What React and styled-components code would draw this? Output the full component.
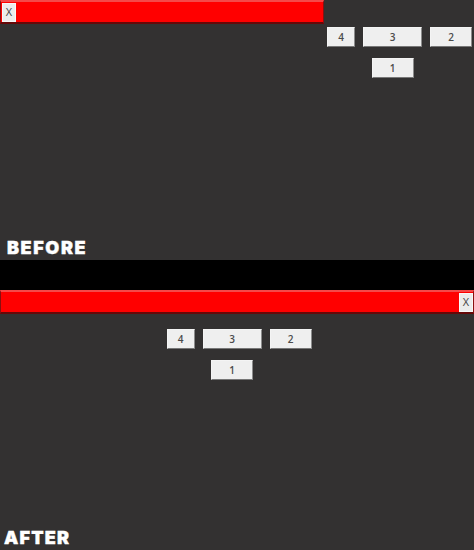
import React from "react";
import styled, { createGlobalStyle } from "styled-components";

const GlobalStyle = createGlobalStyle`
  html, body {
    margin: 0;
    padding: 0;
    background: #000;
  }
  * {
    box-sizing: border-box;
  }
`;

const Page = styled.div`
  width: 474px;
  height: 550px;
  display: flex;
  flex-direction: column;
  gap: 30px;
  overflow: hidden;
  font-family: "Open Sans", "Liberation Sans", sans-serif;
`;

const Panel = styled.section`
  height: 260px;
  background: #333131;
  display: flex;
  flex-direction: column;
`;

const Content = styled.div`
  display: flex;
  flex-direction: ${(p) => (p.$vertical ? "column" : "row")};
  flex: 1;
`;

const Bar = styled.div`
  width: ${(p) => p.$width};
  height: 24px;
  flex: none;
  display: flex;
  justify-content: ${(p) => (p.$closeRight ? "flex-end" : "flex-start")};
  align-items: center;
  padding: ${(p) => (p.$closeRight ? "0" : "0 1px")};
  background: #ff0000;
  border-top: 2px solid #f44a4a;
  border-bottom: 2px solid #650808;
  border-left: 1px solid #8a1010;
  border-right: 1px solid #8a1010;
`;

const CloseButton = styled.button`
  width: 14px;
  height: 19px;
  padding: 0;
  border: 1px solid #f8f8f8;
  background: #ececec;
  color: #444;
  font: 400 11px "Open Sans", sans-serif;
  line-height: 16px;
`;

const ButtonGrid = styled.div`
  display: grid;
  grid-template-columns: 28px 59px 42px;
  grid-auto-rows: 20px;
  column-gap: 8px;
  row-gap: 11px;
  align-self: ${(p) => (p.$centered ? "center" : "flex-start")};
  margin: ${(p) => p.$margin};
`;

const NumberButton = styled.button`
  grid-column: ${(p) => p.$column};
  grid-row: ${(p) => p.$row};
  justify-self: center;
  width: ${(p) => p.$width}px;
  padding: 0;
  border: 1px solid #f4f4f4;
  border-bottom: 1px solid #777;
  border-right: 1px solid #8c8c8c;
  background: #efefef;
  color: #4a4a4a;
  font: 600 10px "Open Sans", sans-serif;
`;

const Label = styled.h2`
  margin: 0 0 ${(p) => p.$bottom}px ${(p) => p.$left}px;
  height: 15px;
  color: #fff;
  font: 900 18px/15px "Inter", "Lato", sans-serif;
  letter-spacing: ${(p) => p.$spacing}px;
  -webkit-text-stroke: 0.4px #fff;
`;

const Buttons = ({ centered, margin }) => (
  <ButtonGrid $centered={centered} $margin={margin}>
    <NumberButton $column={1} $row={1} $width={28}>4</NumberButton>
    <NumberButton $column={2} $row={1} $width={59}>3</NumberButton>
    <NumberButton $column={3} $row={1} $width={42}>2</NumberButton>
    <NumberButton $column={2} $row={2} $width={42}>1</NumberButton>
  </ButtonGrid>
);

const App = () => (
  <>
    <GlobalStyle />
    <Page>
      <Panel>
        <Content>
          <Bar $width="324px">
            <CloseButton>X</CloseButton>
          </Bar>
          <Buttons margin="27px 0 0 3px" />
        </Content>
        <Label $left={7} $bottom={5} $spacing={1.6}>BEFORE</Label>
      </Panel>
      <Panel>
        <Content $vertical>
          <Bar $width="100%" $closeRight>
            <CloseButton>X</CloseButton>
          </Bar>
          <Buttons centered margin="15px 0 0 4px" />
        </Content>
        <Label $left={4} $bottom={5} $spacing={1.2}>AFTER</Label>
      </Panel>
    </Page>
  </>
);

export default App;
